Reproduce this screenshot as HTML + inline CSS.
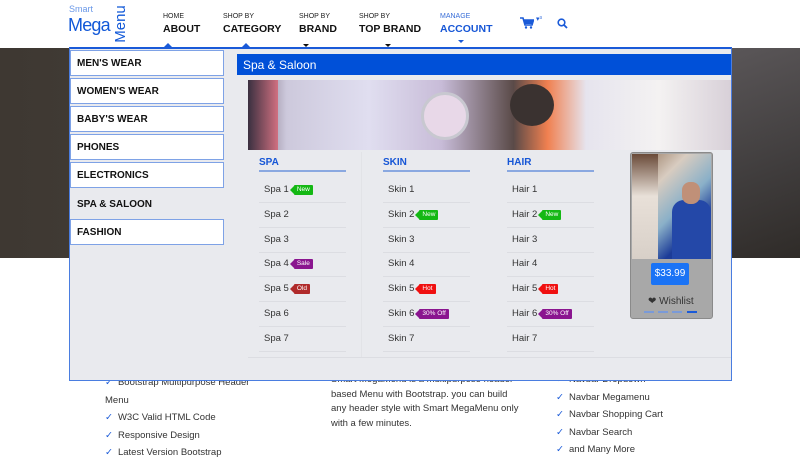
<!DOCTYPE html>
<html><head><meta charset="utf-8"><style>
*{margin:0;padding:0;box-sizing:border-box}
body{width:800px;height:456px;overflow:hidden;background:#fff;font-family:"Liberation Sans",sans-serif;position:relative}
.a{position:absolute}
.hero{left:0;top:48px;width:800px;height:210px;background:linear-gradient(90deg,#3e3832 0%,#45403a 40%,#3c3935 70%,#4a4746 100%)}
.nav .s{font-size:7px;color:#222;position:absolute;top:13px}
.nav .b{font-size:10.5px;font-weight:bold;color:#111;position:absolute;top:23px}
.panel{left:69px;top:47px;width:663px;height:334px;background:#e9eaee;border:1px solid #4a7de0;border-top:2px solid #1a5ad8}
.li{position:absolute;left:70px;width:154px;height:26px;background:#fff;border:1px solid #7ea2e6;font-size:10px;font-weight:bold;color:#111;padding:7px 0 0 6px}
.col h4{position:absolute;font-size:10px;color:#1656d6;font-weight:bold;border-bottom:2px solid #8aa8e0;width:87px;padding-bottom:2px}
.it{position:absolute;font-size:9.5px;color:#333;width:87px;border-bottom:1px solid #dcdde2;height:25px;padding:6px 0 0 5px}
.tg{display:inline-block;font-size:6.5px;color:#fff;padding:1px 3px;margin-left:5px;vertical-align:1px;border-radius:1px;position:relative;line-height:8px}
.tg:before{content:"";position:absolute;left:-4px;top:1px;border-top:4px solid transparent;border-bottom:4px solid transparent;border-right:4px solid;border-right-color:inherit}
.n{background:#14b814;border-color:#14b814}.sl{background:#8a158f;border-color:#8a158f}.o{background:#b02a2a;border-color:#b02a2a}.h{background:#f01010;border-color:#f01010}.p{background:#8a158f;border-color:#8a158f}
.bt{font-size:9.5px;color:#333;line-height:17.5px}
.ck{color:#1a5ad8;margin-right:5px}
</style></head><body>
<div class="a hero"></div>
<div class="a" style="left:731px;top:48px;width:69px;height:210px;background:linear-gradient(160deg,#5a5658,#3f3c3c 60%,#2f2b28)"></div>
<!-- logo -->
<div class="a" style="left:69px;top:4px;font-size:9px;color:#6a98e8">Smart</div>
<div class="a" style="left:68px;top:15px;font-size:18px;color:#1158d8;letter-spacing:-0.8px">Mega</div>
<div class="a" style="left:101px;top:16px;font-size:15px;color:#1158d8;transform:rotate(-90deg);width:40px;text-align:center;line-height:16px">Menu</div>
<!-- nav -->
<div class="nav">
<div class="s" style="left:163px">HOME</div><div class="b" style="left:163px">ABOUT</div>
<div class="s" style="left:223px">SHOP BY</div><div class="b" style="left:223px">CATEGORY</div>
<div class="s" style="left:299px">SHOP BY</div><div class="b" style="left:299px">BRAND</div>
<div class="s" style="left:359px">SHOP BY</div><div class="b" style="left:359px">TOP BRAND</div>
<div class="s" style="left:440px;color:#3a6fd8">MANAGE</div><div class="b" style="left:440px;color:#1656d6">ACCOUNT</div>
</div>
<div class="a" style="left:164px;top:43px;border:4px solid transparent;border-bottom:4px solid #1a5ad8;border-top:0"></div>
<div class="a" style="left:242px;top:43px;border:4px solid transparent;border-bottom:4px solid #1a5ad8;border-top:0"></div>
<div class="a" style="left:303px;top:44px;border:3px solid transparent;border-top:3px solid #111"></div>
<div class="a" style="left:385px;top:44px;border:3px solid transparent;border-top:3px solid #111"></div>
<div class="a" style="left:458px;top:40px;border:3px solid transparent;border-top:3px solid #1a5ad8"></div>
<svg class="a" style="left:520px;top:17px" width="14" height="12"><path d="M0 1h3l2 7h7l1.5-5H4" fill="none" stroke="#1a5ad8" stroke-width="1.6"/><rect x="4" y="3" width="9" height="4" fill="#1a5ad8"/><circle cx="6" cy="10.5" r="1.2" fill="#1a5ad8"/><circle cx="11" cy="10.5" r="1.2" fill="#1a5ad8"/></svg>
<div class="a" style="left:536px;top:15px;font-size:7px;color:#1a5ad8">▾³</div>
<svg class="a" style="left:557px;top:18px" width="11" height="11"><circle cx="4.5" cy="4.5" r="3.3" fill="none" stroke="#1a5ad8" stroke-width="1.6"/><line x1="7" y1="7" x2="10" y2="10" stroke="#1a5ad8" stroke-width="1.8"/></svg>
<div class="a panel"></div>
<div class="li" style="top:50px">MEN'S WEAR</div>
<div class="li" style="top:78px">WOMEN'S WEAR</div>
<div class="li" style="top:106px">BABY'S WEAR</div>
<div class="li" style="top:134px">PHONES</div>
<div class="li" style="top:162px">ELECTRONICS</div>
<div class="li" style="top:191px;background:#e9eaee;border-color:#e9eaee">SPA &amp; SALOON</div>
<div class="li" style="top:219px">FASHION</div>
<div class="a" style="left:237px;top:54px;width:494px;height:21px;background:#0050d8;color:#fff;font-size:12px;padding:4px 0 0 6px">Spa &amp; Saloon</div>
<div class="a" style="left:248px;top:80px;width:483px;height:70px;background:linear-gradient(90deg,#6a5a6a 0%,#cdc9dc 8%,#e0def0 25%,#c8bcd8 40%,#5a4a48 55%,#f08050 62%,#e6e4ee 70%,#f4f2f2 85%,#d8d0d8 100%)"></div>
<div class="a" style="left:248px;top:80px;width:30px;height:70px;background:linear-gradient(90deg,#3a3040,#d07080)"></div>
<div class="a" style="left:421px;top:92px;width:48px;height:48px;border-radius:50%;background:#e8d8e8;border:3px solid #c8c8d0"></div>
<div class="a" style="left:510px;top:84px;width:44px;height:42px;border-radius:50%;background:#3a3230"></div>
<div class="a" style="left:361px;top:152px;width:1px;height:205px;background:#e2e3e7"></div>
<div class="a" style="left:248px;top:357px;width:483px;height:1px;background:#dcdde2"></div>
<div class="col">
<h4 style="left:259px;top:157px">SPA</h4><h4 style="left:383px;top:157px">SKIN</h4><h4 style="left:507px;top:157px">HAIR</h4>
</div>
<div class="it" style="left:259px;top:178px">Spa 1<span class="tg n">New</span></div>
<div class="it" style="left:259px;top:203px">Spa 2</div>
<div class="it" style="left:259px;top:228px">Spa 3</div>
<div class="it" style="left:259px;top:252px">Spa 4<span class="tg sl">Sale</span></div>
<div class="it" style="left:259px;top:277px">Spa 5<span class="tg o">Old</span></div>
<div class="it" style="left:259px;top:302px">Spa 6</div>
<div class="it" style="left:259px;top:327px">Spa 7</div>
<div class="it" style="left:383px;top:178px">Skin 1</div>
<div class="it" style="left:383px;top:203px">Skin 2<span class="tg n">New</span></div>
<div class="it" style="left:383px;top:228px">Skin 3</div>
<div class="it" style="left:383px;top:252px">Skin 4</div>
<div class="it" style="left:383px;top:277px">Skin 5<span class="tg h">Hot</span></div>
<div class="it" style="left:383px;top:302px">Skin 6<span class="tg p">30% Off</span></div>
<div class="it" style="left:383px;top:327px">Skin 7</div>
<div class="it" style="left:507px;top:178px">Hair 1</div>
<div class="it" style="left:507px;top:203px">Hair 2<span class="tg n">New</span></div>
<div class="it" style="left:507px;top:228px">Hair 3</div>
<div class="it" style="left:507px;top:252px">Hair 4</div>
<div class="it" style="left:507px;top:277px">Hair 5<span class="tg h">Hot</span></div>
<div class="it" style="left:507px;top:302px">Hair 6<span class="tg p">30% Off</span></div>
<div class="it" style="left:507px;top:327px">Hair 7</div>
<!-- product card -->
<div class="a" style="left:630px;top:152px;width:83px;height:167px;background:#a8a8a8;border:1px solid #8a8a8a;border-radius:3px"></div>
<div class="a" style="left:632px;top:154px;width:79px;height:105px;background:linear-gradient(135deg,#8a6a50 0%,#d8ccc0 30%,#8ab0c8 55%,#1c3c98 75%,#203a90 100%)"></div>
<div class="a" style="left:632px;top:154px;width:26px;height:105px;background:linear-gradient(180deg,#6a4a38,#e8e0d8 40%,#d8d0c8)"></div>
<div class="a" style="left:672px;top:200px;width:39px;height:59px;background:#2448a8;border-radius:12px 12px 0 0"></div>
<div class="a" style="left:682px;top:182px;width:18px;height:22px;background:#c09078;border-radius:8px"></div>
<div class="a" style="left:651px;top:263px;width:38px;height:22px;background:#1a73f5;border-radius:2px;color:#fff;font-size:10px;text-align:center;line-height:22px">$33.99</div>
<div class="a" style="left:648px;top:296px;font-size:10px;color:#333">&#10084; Wishlist</div>
<div class="a" style="left:644px;top:311px;width:10px;height:2px;background:#7a9ad8"></div>
<div class="a" style="left:658px;top:311px;width:10px;height:2px;background:#7a9ad8"></div>
<div class="a" style="left:672px;top:311px;width:10px;height:2px;background:#7a9ad8"></div>
<div class="a" style="left:687px;top:311px;width:10px;height:2px;background:#1a5ad8"></div>
<!-- bottom text -->
<div class="a bt" style="left:105px;top:374px;width:170px;clip-path:inset(7px 0 0 0)"><span class="ck">✓</span>Bootstrap Multipurpose Header<br>Menu<br><span class="ck">✓</span>W3C Valid HTML Code<br><span class="ck">✓</span>Responsive Design<br><span class="ck">✓</span>Latest Version Bootstrap</div>
<div class="a bt" style="left:331px;top:373px;width:190px;clip-path:inset(8px 0 0 0);line-height:14.5px">Smart MegaMenu is a multipurpose header based Menu with Bootstrap. you can build any header style with Smart MegaMenu only with a few minutes.</div>
<div class="a bt" style="left:556px;top:371px;clip-path:inset(10px 0 0 0)"><span class="ck">✓</span>Navbar Dropdown<br><span class="ck">✓</span>Navbar Megamenu<br><span class="ck">✓</span>Navbar Shopping Cart<br><span class="ck">✓</span>Navbar Search<br><span class="ck">✓</span>and Many More</div>
</body></html>
